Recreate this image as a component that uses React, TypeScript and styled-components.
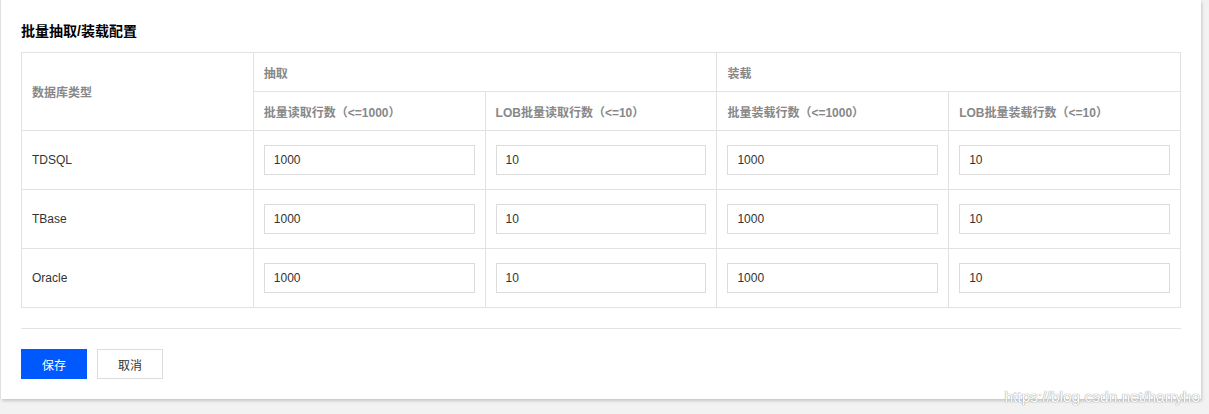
import React from "react";
import styled, { createGlobalStyle } from "styled-components";

const GlobalStyle = createGlobalStyle`
  html, body {
    margin: 0;
    padding: 0;
    background: #f2f2f2;
    font-family: "Liberation Sans", "Noto Sans CJK SC", sans-serif;
    font-size: 12px;
    color: #333;
  }
`;

const Page = styled.div`
  width: 1209px;
  height: 414px;
  overflow: hidden;
  position: relative;
`;

const Card = styled.div`
  width: 1160px;
  margin-left: 1px;
  background: #fff;
  padding: 21px 20px 20px 20px;
  box-shadow: -1px 0 0 #e0e0e0, 1px 2px 3px rgba(0, 0, 0, 0.18);
`;

const Title = styled.h3`
  margin: 0 0 11px;
  font-size: 14px;
  line-height: 20px;
  font-weight: bold;
  color: #000;
`;

const Table = styled.table`
  width: 1160px;
  table-layout: fixed;
  border-collapse: collapse;
  border: 1px solid #e2e2e2;
`;

const HeadCell = styled.th`
  height: 38px;
  padding: 0 10px;
  border: 1px solid #e2e2e2;
  text-align: left;
  font-weight: bold;
  color: #888;
  font-size: 12px;
`;

const BodyCell = styled.td`
  height: 58px;
  padding: 0 10px;
  border: 1px solid #e2e2e2;
  color: #333;
`;

const NumInput = styled.input`
  box-sizing: border-box;
  width: 100%;
  height: 30px;
  border: 1px solid #dcdcdc;
  padding: 0 9px;
  font: inherit;
  font-size: 12px;
  color: #333;
  outline: none;
  display: block;
`;

const Divider = styled.hr`
  margin: 20px 0 20px;
  border: 0;
  border-top: 1px solid #e2e2e2;
`;

const Actions = styled.div`
  display: flex;
  gap: 10px;
`;

const Button = styled.button<{ $primary?: boolean }>`
  width: 66px;
  height: 30px;
  border: 1px solid ${(p) => (p.$primary ? "#0058ff" : "#dcdcdc")};
  background: ${(p) => (p.$primary ? "#0058ff" : "#fff")};
  color: ${(p) => (p.$primary ? "#fff" : "#333")};
  font: inherit;
  font-size: 12px;
  cursor: pointer;
`;

const Watermark = styled.div`
  position: absolute;
  right: 9px;
  bottom: 8px;
  font-size: 15.5px;
  color: #fff;
  text-shadow: 0 0 1px #999, 0 0 1px #999;
`;

const rows = [
  { name: "TDSQL", values: ["1000", "10", "1000", "10"] },
  { name: "TBase", values: ["1000", "10", "1000", "10"] },
  { name: "Oracle", values: ["1000", "10", "1000", "10"] },
];

const App = () => (
  <Page>
    <GlobalStyle />
    <Card>
      <Title>批量抽取/装载配置</Title>
      <Table>
        <thead>
          <tr>
            <HeadCell rowSpan={2}>数据库类型</HeadCell>
            <HeadCell colSpan={2}>抽取</HeadCell>
            <HeadCell colSpan={2}>装载</HeadCell>
          </tr>
          <tr>
            <HeadCell>批量读取行数（&lt;=1000）</HeadCell>
            <HeadCell>LOB批量读取行数（&lt;=10）</HeadCell>
            <HeadCell>批量装载行数（&lt;=1000）</HeadCell>
            <HeadCell>LOB批量装载行数（&lt;=10）</HeadCell>
          </tr>
        </thead>
        <tbody>
          {rows.map((r) => (
            <tr key={r.name}>
              <BodyCell>{r.name}</BodyCell>
              {r.values.map((v, i) => (
                <BodyCell key={i}>
                  <NumInput defaultValue={v} />
                </BodyCell>
              ))}
            </tr>
          ))}
        </tbody>
      </Table>
      <Divider />
      <Actions>
        <Button $primary>保存</Button>
        <Button>取消</Button>
      </Actions>
    </Card>
    <Watermark>https://blog.csdn.net/harryho</Watermark>
  </Page>
);

export default App;
